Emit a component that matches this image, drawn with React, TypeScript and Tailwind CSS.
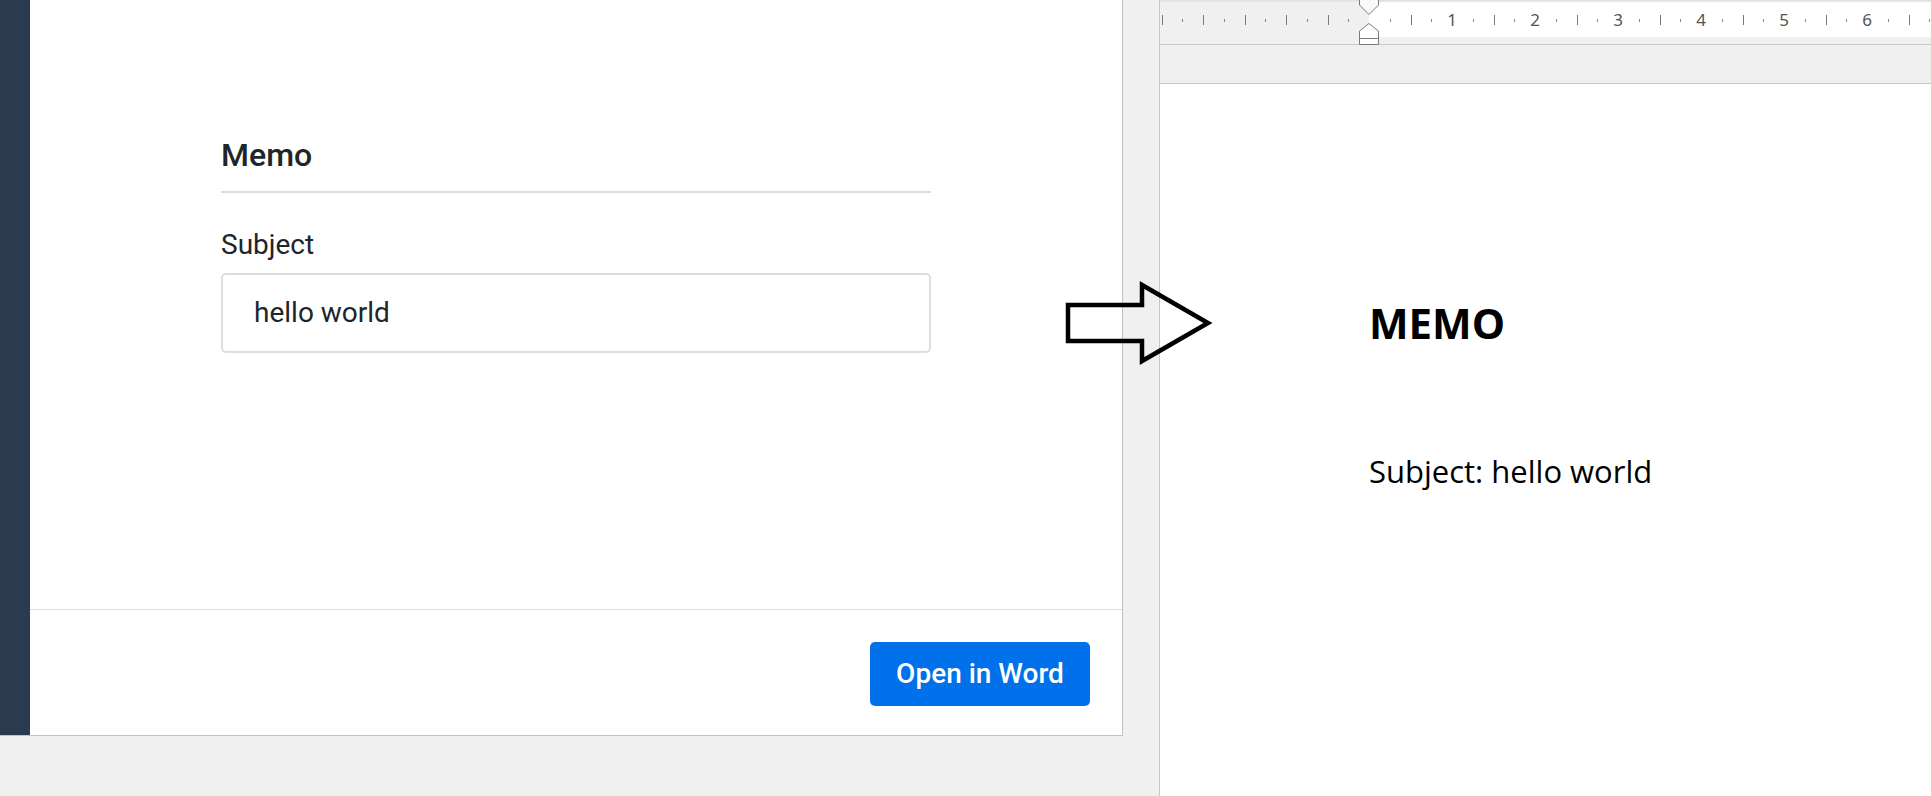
import React from "react";

const PX_PER_INCH = 83;
const ZERO_X = 209; // relative to page region left (1160)

function Ruler() {
  const ticks: { x: number; kind: "short" | "long" | "num"; n?: number }[] = [];
  for (let k = -10; k <= 27; k++) {
    const x = ZERO_X + (k * PX_PER_INCH) / 4;
    if (x < 0 || x > 772) continue;
    if (k === 0) continue;
    if (k > 0 && k % 4 === 0) ticks.push({ x, kind: "num", n: k / 4 });
    else if (k % 2 === 0) ticks.push({ x, kind: "long" });
    else ticks.push({ x, kind: "short" });
  }
  return (
    <div className="relative h-[45px] border-b border-[#c8c8c8] bg-[#f0f0f0]">
      <div className="absolute left-0 right-0 top-0 h-[3px] bg-gradient-to-b from-[#dedede] to-[#f0f0f0]" />
      <div className="absolute top-[2px] h-[35px] left-[209px] right-0 bg-white" />
      {ticks.map((t, i) =>
        t.kind === "num" ? (
          <span
            key={i}
            className="absolute top-[10px] w-[20px] -ml-[10px] text-center text-[17px] leading-[20px] text-[#555555]"
            style={{ left: t.x, fontFamily: '"Noto Sans", "Open Sans", sans-serif' }}
          >
            {t.n}
          </span>
        ) : t.kind === "long" ? (
          <span key={i} className="absolute top-[15px] h-[10px] w-px bg-[#7a7a7a]" style={{ left: Math.round(t.x) }} />
        ) : (
          <span key={i} className="absolute top-[19px] h-[3px] w-px bg-[#858585]" style={{ left: Math.round(t.x) }} />
        )
      )}
      <svg className="absolute left-[199px] top-0" width="20" height="45" viewBox="0 0 20 45">
        <path d="M0.5,0 V5 L10,14.5 L19.5,5 V0" fill="#fafafa" stroke="#7a7a7a" strokeWidth="1" />
        <path d="M10,23.5 L0.5,31 V38.5 H19.5 V31 Z" fill="#ffffff" stroke="#7a7a7a" strokeWidth="1" />
        <path d="M0.5,38.5 H19.5 V44.5 H0.5 Z" fill="#ffffff" stroke="#7a7a7a" strokeWidth="1" />
      </svg>
    </div>
  );
}

export default function App() {
  return (
    <div className="relative flex h-[796px] w-[1931px] overflow-hidden bg-[#f0f0f0]">
      {/* Left: app panel */}
      <div className="w-[1159px] shrink-0">
        <div className="flex h-[736px] w-[1123px] border-b border-r border-[#c2c2c2]">
          <div className="w-[30px] shrink-0 bg-[#2b3a4f]" />
          <div
            className="flex flex-1 flex-col bg-white"
            style={{ fontFamily: 'Roboto, "Liberation Sans", sans-serif' }}
          >
            <div className="h-[609px]">
              <div className="mx-auto w-[710px] pt-[135px]">
                <h2 className="text-[32px] font-medium leading-[40px] text-[#212529]">Memo</h2>
                <div className="mt-[16px] h-[2px] bg-[#d8dde6]" />
                <div className="mt-[34px] text-[28px] leading-[36px] text-[#212529]">Subject</div>
                <div className="mt-[10px] flex h-[80px] items-center rounded-[5px] border-2 border-[#d8dde6] pl-[31px] text-[28px] leading-[36px] text-[#212529]">
                  hello world
                </div>
              </div>
            </div>
            <div className="h-px bg-[#d8dde6]" />
            <div className="flex h-[125px] items-start justify-end pr-[32px] pt-[32px]">
              <button className="flex h-[64px] w-[220px] items-center justify-center rounded-[5px] bg-[#0070eb] text-[28px] font-medium leading-[36px] text-white">
                Open in Word
              </button>
            </div>
          </div>
        </div>
      </div>

      {/* Right: Word document */}
      <div className="flex w-[772px] shrink-0 flex-col border-l border-[#c6c6c6]">
        <Ruler />
        <div className="h-[39px] border-b border-[#c8c8c8] bg-[#f0f0f0]" />
        <div
          className="flex-1 bg-white pl-[209px] pt-[213px] text-black"
          style={{ fontFamily: '"Open Sans", "Noto Sans", sans-serif' }}
        >
          <div className="text-[42px] font-bold leading-[52px]">MEMO</div>
          <div className="mt-[102px] text-[31px] leading-[40px]">Subject: hello world</div>
        </div>
      </div>

      {/* Arrow overlay */}
      <svg className="absolute left-[1060px] top-[275px]" width="160" height="95" viewBox="0 0 160 95">
        <polygon
          points="8,30 82,30 82,10 148,48 82,86 82,66 8,66"
          fill="none"
          stroke="#000"
          strokeWidth="4.5"
          strokeLinejoin="miter"
        />
      </svg>
    </div>
  );
}
